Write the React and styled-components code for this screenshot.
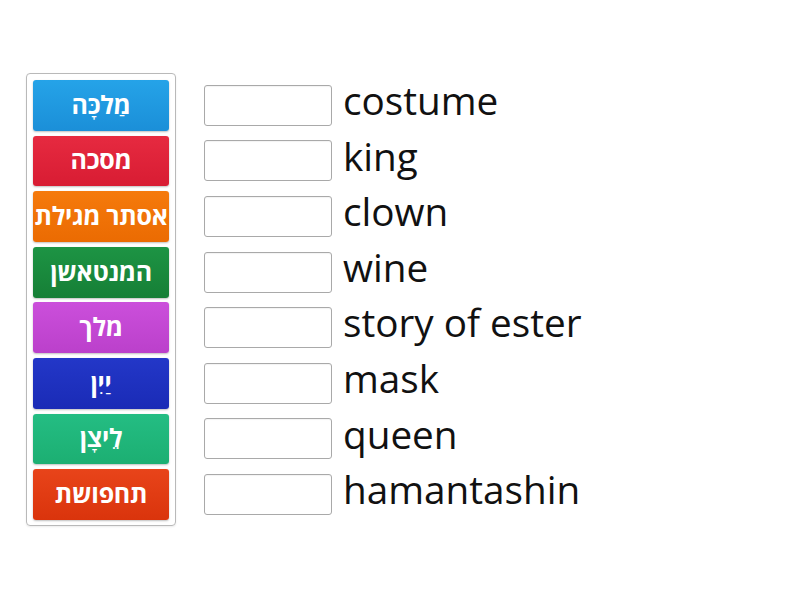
import React from "react";
import styled, { createGlobalStyle } from "styled-components";

const Global = createGlobalStyle`
  html, body { margin: 0; padding: 0; background: #fff; }
  body { font-family: "Open Sans", "Noto Sans", sans-serif; }
`;

const Page = styled.div`
  width: 800px;
  height: 600px;
  display: flex;
  align-items: flex-start;
  padding: 73px 0 0 26px;
  box-sizing: border-box;
`;

const Panel = styled.div`
  border: 1px solid #b9b9b9;
  border-radius: 4px;
  padding: 6px 6px 5px 6px;
  display: flex;
  flex-direction: column;
  gap: 4.8px;
  box-shadow: 0 1px 2px rgba(0,0,0,0.08);
`;

const Tile = styled.div`
  width: 136px;
  height: 50.8px;
  border-radius: 3px;
  background: linear-gradient(180deg, ${p => p.$c1} 0%, ${p => p.$c2} 100%);
  box-shadow: 0 1px 2px rgba(0,0,0,0.25);
  display: flex;
  align-items: center;
  justify-content: center;
  color: #fff;
  font-family: "Open Sans", "Noto Sans", sans-serif;
  font-weight: 700;
  font-size: 25px;
  letter-spacing: -0.3px;
  direction: rtl;
  white-space: nowrap;
  overflow: hidden;
  padding-bottom: 3px;
  box-sizing: border-box;
`;

const Answers = styled.div`
  margin-left: 28px;
  margin-top: 7px;
  display: flex;
  flex-direction: column;
  gap: 4.8px;
`;

const Row = styled.div`
  height: 50.8px;
  display: flex;
  align-items: center;
  gap: 11px;
`;

const Box = styled.div`
  width: 126px;
  height: 39px;
  border: 1px solid #a9a9a9;
  border-radius: 3px;
  background: #fff;
  box-shadow: inset 0 1px 1px rgba(0,0,0,0.05);
`;

const Word = styled.span`
  font-family: "Open Sans", sans-serif;
  font-size: 38.7px;
  color: #111;
  line-height: 1;
  margin-bottom: 10px;
`;

const tiles = [
  { t: "מַלכָּה", c1: "#25a3e8", c2: "#1b8fd8" },
  { t: "מסכה", c1: "#e62a40", c2: "#d81c33" },
  { t: "אסתר מגילת", c1: "#f57a0c", c2: "#eb6b02" },
  { t: "המנטאשן", c1: "#1d9444", c2: "#167f36" },
  { t: "מלך", c1: "#cb4fdb", c2: "#bb40cb" },
  { t: "יַיִן", c1: "#2337c8", c2: "#1a2bb6" },
  { t: "לֵיצָן", c1: "#24bd83", c2: "#1caf72" },
  { t: "תחפושת", c1: "#e8441a", c2: "#da340c" },
];

const words = ["costume", "king", "clown", "wine", "story of ester", "mask", "queen", "hamantashin"];

export default function App() {
  return (
    <>
      <Global />
      <Page>
        <Panel>
          {tiles.map((x, i) => (
            <Tile key={i} $c1={x.c1} $c2={x.c2}>{x.t}</Tile>
          ))}
        </Panel>
        <Answers>
          {words.map((w, i) => (
            <Row key={i}>
              <Box />
              <Word>{w}</Word>
            </Row>
          ))}
        </Answers>
      </Page>
    </>
  );
}
